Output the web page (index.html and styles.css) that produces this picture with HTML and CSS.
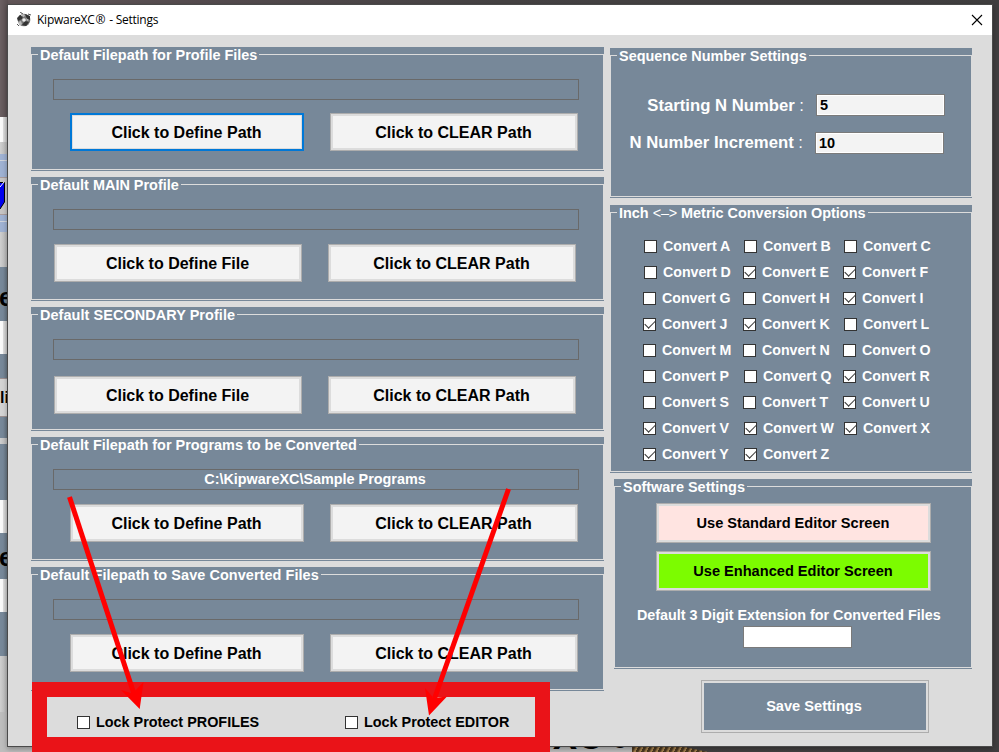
FILE: index.html
```
<!DOCTYPE html>
<html lang="en">
<head>
    <meta charset="UTF-8">
    <meta name="viewport" content="width=device-width, initial-scale=1.0">
    <title>KipwareXC® - Settings</title>
    <link rel="stylesheet" href="styles.css">
</head>
<body>
    <!-- main program showing around the dialog -->
    <div class="behind">
        <div class="strip photo"></div>
        <div class="strip white"></div>
        <div class="strip gray"></div>
        <div class="strip blue"></div>
        <div class="strip icon">
            <svg width="8" height="38" viewBox="0 0 8 38"><path d="M0 4.5H4.5V24L0 31" fill="#0000f0" stroke="#000"/><path d="M0 9L4 4" stroke="#fff"/></svg>
        </div>
        <div class="strip blue short"></div>
        <div class="strip gray tall"></div>
        <div class="strip slate label-1"><span class="big">e</span></div>
        <div class="strip white box"></div>
        <div class="strip slate gap"></div>
        <div class="strip button-edge"><span>li</span></div>
        <div class="strip slate lower"></div>
        <div class="strip gray line"></div>
        <div class="strip slate label-2"></div>
        <div class="strip white box"></div>
        <div class="strip slate label-3"><span class="big">e</span></div>
        <div class="strip white box"></div>
        <div class="strip slate last"></div>
        <div class="strip gray rest"></div>
    </div>
    <div class="behind-bottom">
        <div class="brand"><span>XC</span><small>®</small></div>
        <div class="rope"></div>
    </div>

    <div class="window">
        <div class="titlebar">
            <svg class="app-icon" width="16" height="16" viewBox="0 0 16 16">
                <circle cx="8" cy="8" r="6.3" fill="#777"/>
                <path d="M1 6L4 3L7 4L6 7L2 9Z M9 2L14 4L14 8L11 7Z M9 9L13 10L10 14L6 13Z" fill="#333"/>
                <path d="M5 1L9 3L8 5L5 4Z M2 10L5 9L6 12L4 14Z M10 6L13 8L11 9Z" fill="#bbb"/>
                <circle cx="8" cy="8" r="1.8" fill="#eee"/>
                <path d="M4 0L7 2M12 2L15 3M1 12L3 14" stroke="#555"/>
            </svg>
            <span class="title">KipwareXC<span class="reg">®</span> - Settings</span>
            <svg class="close" width="12" height="12" viewBox="0 0 12 12"><path d="M1 1L11 11M11 1L1 11" stroke="#000" stroke-width="1.1"/></svg>
        </div>

        <div class="content">
            <div class="left">
                <div class="group">
                    <fieldset>
                        <legend>Default Filepath for Profile Files</legend>
                        <div class="path"></div>
                        <div class="buttons path-buttons first">
                            <button class="focused">Click to Define Path</button>
                            <button class="wide">Click to CLEAR Path</button>
                        </div>
                    </fieldset>
                </div>
                <div class="group">
                    <fieldset>
                        <legend>Default MAIN Profile</legend>
                        <div class="path"></div>
                        <div class="buttons">
                            <button class="wide">Click to Define File</button>
                            <button class="wide">Click to CLEAR Path</button>
                        </div>
                    </fieldset>
                </div>
                <div class="group">
                    <fieldset>
                        <legend class="secondary">Default SECONDARY Profile</legend>
                        <div class="path"></div>
                        <div class="buttons lowered">
                            <button class="wide">Click to Define File</button>
                            <button class="wide">Click to CLEAR Path</button>
                        </div>
                    </fieldset>
                </div>
                <div class="group">
                    <fieldset>
                        <legend>Default Filepath for Programs to be Converted</legend>
                        <div class="path">C:\KipwareXC\Sample Programs</div>
                        <div class="buttons path-buttons">
                            <button>Click to Define Path</button>
                            <button class="wide">Click to CLEAR Path</button>
                        </div>
                    </fieldset>
                </div>
                <div class="group">
                    <fieldset>
                        <legend class="secondary">Default Filepath to Save Converted Files</legend>
                        <div class="path"></div>
                        <div class="buttons path-buttons">
                            <button>Click to Define Path</button>
                            <button class="wide">Click to CLEAR Path</button>
                        </div>
                    </fieldset>
                </div>
                <div class="locks">
                    <label class="check"><input type="checkbox">Lock Protect PROFILES</label>
                    <label class="check"><input type="checkbox">Lock Protect EDITOR</label>
                </div>
            </div>

            <div class="right">
                <div class="group sequence">
                    <fieldset>
                        <legend>Sequence Number Settings</legend>
                        <div class="number-row">
                            <label>Starting N Number <i>:</i></label>
                            <input type="text" value="5">
                        </div>
                        <div class="number-row second">
                            <label>N Number Increment <i>:</i></label>
                            <input type="text" value="10">
                        </div>
                    </fieldset>
                </div>

                <div class="group convert">
                    <fieldset>
                        <legend>Inch <span class="arrow">&lt;&ndash;&gt;</span> Metric Conversion Options</legend>
                        <div class="convert-grid">
                            <label class="check nudge"><input type="checkbox">Convert A</label>
                            <label class="check nudge"><input type="checkbox">Convert B</label>
                            <label class="check nudge"><input type="checkbox">Convert C</label>
                            <label class="check nudge"><input type="checkbox">Convert D</label>
                            <label class="check"><input type="checkbox" checked>Convert E</label>
                            <label class="check"><input type="checkbox" checked>Convert F</label>
                            <label class="check"><input type="checkbox">Convert G</label>
                            <label class="check"><input type="checkbox">Convert H</label>
                            <label class="check"><input type="checkbox" checked>Convert I</label>
                            <label class="check"><input type="checkbox" checked>Convert J</label>
                            <label class="check"><input type="checkbox" checked>Convert K</label>
                            <label class="check nudge"><input type="checkbox">Convert L</label>
                            <label class="check"><input type="checkbox">Convert M</label>
                            <label class="check"><input type="checkbox">Convert N</label>
                            <label class="check"><input type="checkbox">Convert O</label>
                            <label class="check"><input type="checkbox">Convert P</label>
                            <label class="check nudge"><input type="checkbox">Convert Q</label>
                            <label class="check"><input type="checkbox" checked>Convert R</label>
                            <label class="check"><input type="checkbox">Convert S</label>
                            <label class="check"><input type="checkbox">Convert T</label>
                            <label class="check"><input type="checkbox" checked>Convert U</label>
                            <label class="check"><input type="checkbox" checked>Convert V</label>
                            <label class="check nudge"><input type="checkbox" checked>Convert W</label>
                            <label class="check nudge"><input type="checkbox" checked>Convert X</label>
                            <label class="check"><input type="checkbox" checked>Convert Y</label>
                            <label class="check nudge"><input type="checkbox" checked>Convert Z</label>
                        </div>
                    </fieldset>
                </div>

                <div class="group software">
                    <fieldset>
                        <legend>Software Settings</legend>
                        <div class="editors">
                            <button class="standard">Use Standard Editor Screen</button>
                            <button class="enhanced">Use Enhanced Editor Screen</button>
                        </div>
                        <div class="extension">
                            <label>Default 3 Digit Extension for Converted Files</label>
                            <input type="text">
                        </div>
                    </fieldset>
                </div>

                <button class="save">Save Settings</button>
            </div>
        </div>
    </div>

    <!-- red callout and arrows on top of the dialog -->
    <div class="callout"></div>
    <svg class="arrows" width="999" height="752" viewBox="0 0 999 752">
        <path d="M69.5 497L135 697" stroke="#ff0000" stroke-width="5"/>
        <path d="M121 690L132.500 693.500L143.500 682L139.700 709Z" fill="#ff0000"/>
        <path d="M508.500 489L434 700" stroke="#ff0000" stroke-width="5"/>
        <path d="M425 688L433.500 698L447 696.500L429 715.500Z" fill="#ff0000"/>
    </svg>
</body>
</html>
```
FILE: styles.css
```
* {
    box-sizing: border-box;
}
body {
    margin: 0;
    width: 999px;
    height: 752px;
    overflow: hidden;
    position: relative;
    background: linear-gradient(to right, #635759 0, #544b4e 200px, #454243 500px, #403e3f 999px);
    font-family: "Liberation Sans", Arial, sans-serif;
    font-size: 14.5px;
    font-weight: bold;
    color: #FFFFFF;
}

/* Main program behind the dialog */
.behind {
    position: absolute;
    left: 0;
    top: 0;
    width: 8px;
    height: 752px;
    display: flex;
    flex-direction: column;
}
.strip {
    flex: none;
    overflow: hidden;
    color: #000000;
}
.photo {
    height: 117px;
    background: linear-gradient(to right, #6b6062, #5b5052);
}
.white {
    height: 25px;
    background: linear-gradient(to right, #FAFAFA 3px, #E0E0E0 3px, #C0C0C0);
}
.gray {
    height: 12px;
    background: linear-gradient(to right, #CFCFCF, #B4B4B4);
}
.blue {
    height: 23px;
    background: linear-gradient(#9FB2D3 6px, #D0D4DC 6px, #D0D4DC 7px, #9FB2D3 7px);
}
.icon {
    height: 38px;
    background: #C6C4C4;
    border-top: 1px solid #A99B9B;
    border-bottom: 1px solid #A99B9B;
}
.icon svg {
    display: block;
}
.short {
    height: 17px;
}
.tall {
    height: 35px;
}
.slate {
    background: linear-gradient(to right, #778899 3px, #657380);
}
.label-1 {
    height: 54px;
}
.big {
    display: block;
    margin: 16px 0 0 -1px;
    font-size: 25px;
    line-height: 28px;
}
.box {
    height: 33px;
}
.gap {
    height: 24px;
}
.button-edge {
    height: 39px;
    background: #D4D4D4;
    border-top: 1px solid #9C9090;
    border-bottom: 1px solid #9C9090;
    line-height: 37px;
    font-size: 16px;
}
.lower {
    height: 21px;
}
.line {
    height: 6px;
}
.label-2 {
    height: 56px;
}
.label-3 {
    height: 46px;
}
.label-3 .big {
    margin-top: 10px;
}
.last {
    height: 44px;
}
.rest {
    height: 96px;
}
.behind-bottom {
    position: absolute;
    left: 0;
    bottom: 0;
    width: 999px;
    height: 40px;
    display: flex;
}
.brand {
    width: 632px;
    padding-left: 553px;
    background: #BDBDBD;
    color: #000000;
    white-space: nowrap;
    display: flex;
}
.brand span {
    font-size: 36px;
    line-height: 50px;
}
.brand small {
    font-size: 22px;
    font-weight: normal;
    margin-left: 9px;
    line-height: 58px;
}
.rope {
    width: 76px;
    background: repeating-linear-gradient(115deg, #4a3720 0, #4a3720 2px, #a8834f 4px, #a8834f 5px);
    clip-path: polygon(0 0, 60% 84%, 100% 100%, 0 100%);
}

/* Dialog */
.window {
    position: absolute;
    left: 7px;
    top: 4px;
    width: 986px;
    height: 743px;
    border: 1px solid #4A4A4A;
    background-color: #DCDCDC;
    box-shadow: 0 2px 5px rgba(0, 0, 0, 0.3);
}
.titlebar {
    height: 30px;
    background-color: #FFFFFF;
    color: #000000;
    display: flex;
    align-items: center;
    padding: 0 9px 1px 8px;
}
.title {
    flex: 1;
    margin-left: 5px;
    font-family: "Open Sans", "Noto Sans", sans-serif;
    font-size: 12px;
    font-weight: normal;
    letter-spacing: -0.25px;
}
.reg {
    margin: 0 1px;
}
.content {
    display: flex;
    gap: 6px;
    padding: 12px 0 0 23px;
}
.left {
    width: 573px;
    display: flex;
    flex-direction: column;
    gap: 6px;
}
.right {
    width: 362px;
    padding-top: 1px;
}
.group {
    height: 124px;
    background-color: #778899;
    padding-bottom: 1px;
}
fieldset {
    height: 100%;
    min-width: 0;
    margin: 0;
    padding: 0;
    border: 1px solid #DCDCDC;
}
legend {
    height: 15px;
    line-height: 17px;
    margin-left: 6px;
    padding: 0 2px;
    font-size: 14.45px;
    white-space: nowrap;
}
.secondary {
    letter-spacing: 0.07px;
}
.arrow {
    font-weight: normal;
    letter-spacing: -0.2px;
}
.path {
    width: 526px;
    height: 21px;
    margin: 17px 0 0 21px;
    border: 1px solid #696969;
    padding-right: 2px;
    text-align: center;
    line-height: 19px;
    font-size: 14.4px;
}
.buttons {
    display: flex;
    gap: 26px;
    margin: 14px 0 0 22px;
}
.path-buttons {
    margin-left: 38px;
}
.first {
    margin-top: 13px;
}
.lowered {
    margin-top: 16px;
}
button {
    width: 234px;
    height: 38px;
    margin: 0;
    padding: 2px 1px 0 0;
    background-color: #F3F3F3;
    border: 1px solid #ADADAD;
    box-shadow: inset 0 0 0 2px #DCDCDC;
    font: bold 16px "Liberation Sans", Arial, sans-serif;
    color: #000000;
}
.wide {
    width: 248px;
}
.focused {
    border: 2px solid #0078D7;
    box-shadow: inset 0 0 0 1px #DCDCDC;
}

/* Checkboxes */
.check {
    display: flex;
    align-items: center;
    gap: 6px;
    height: 17px;
    line-height: 15px;
    padding-bottom: 1px;
    white-space: nowrap;
}
.check input {
    appearance: none;
    width: 13px;
    height: 13px;
    margin: 1px 0 0;
    background-color: #FFFFFF;
    border: 1px solid #333333;
    display: flex;
}
.check input:checked::after {
    content: "";
    width: 9px;
    height: 5px;
    margin: 1px 0 0 1px;
    border-left: 1.4px solid #333333;
    border-bottom: 1.4px solid #333333;
    transform: rotate(-45deg);
}
.nudge {
    margin-left: 1px;
}
.locks {
    display: flex;
    margin: 17px 0 0 46px;
    color: #000000;
    font-size: 14.4px;
}
.locks .check {
    flex: none;
    width: 268px;
}

/* Right column */
input[type="text"] {
    padding: 0 3px;
    margin: 0;
    background-color: #F3F3F3;
    border: 1px solid #7A7A7A;
    box-shadow: inset 0 0 0 1px #FFFFFF;
    font: bold 14.5px "Liberation Sans", Arial, sans-serif;
    color: #000000;
}
.sequence {
    height: 150px;
}
.number-row {
    display: flex;
    align-items: center;
    justify-content: flex-end;
    gap: 12px;
    height: 22px;
    margin: 31px 26px 0 0;
    font-size: 16.7px;
}
.number-row label {
    padding-top: 1px;
}
.second {
    margin: 16px 27px 0 0;
}
.second label {
    padding-top: 0;
}
.number-row i {
    font-style: normal;
    font-weight: normal;
}
.number-row input {
    width: 129px;
    height: 22px;
}
.convert {
    height: 268px;
    margin-top: 7px;
}
.convert-grid {
    display: grid;
    grid-template-columns: repeat(3, 100px);
    row-gap: 9px;
    margin: 18px 0 0 32px;
    font-size: 14.2px;
}
.software {
    height: 190px;
    margin: 6px 0 0 4px;
}
.editors {
    display: flex;
    flex-direction: column;
    gap: 8px;
    margin: 9px 0 0 41px;
}
.editors button {
    width: 275px;
    height: 40px;
    padding-top: 0;
    font-size: 14.6px;
}
.editors .standard {
    background-color: #FFE4E1;
}
.editors .enhanced {
    background-color: #7CFC00;
}
.extension {
    display: flex;
    flex-direction: column;
    margin: 15px 0 0 22px;
    line-height: 19px;
    font-size: 14.35px;
}
.extension input {
    width: 109px;
    height: 22px;
    margin: 1px 0 0 106px;
    background-color: #FFFFFF;
}
.save {
    display: block;
    width: 228px;
    height: 53px;
    margin: 11px 0 0 91px;
    padding: 0 2px 2px 0;
    background-color: #778899;
    font-size: 14.6px;
    color: #FFFFFF;
}

/* Callout */
.callout {
    position: absolute;
    left: 32px;
    top: 682px;
    width: 518px;
    height: 70px;
    border: 15px solid #EA1318;
}
.arrows {
    position: absolute;
    left: 0;
    top: 0;
}
```
